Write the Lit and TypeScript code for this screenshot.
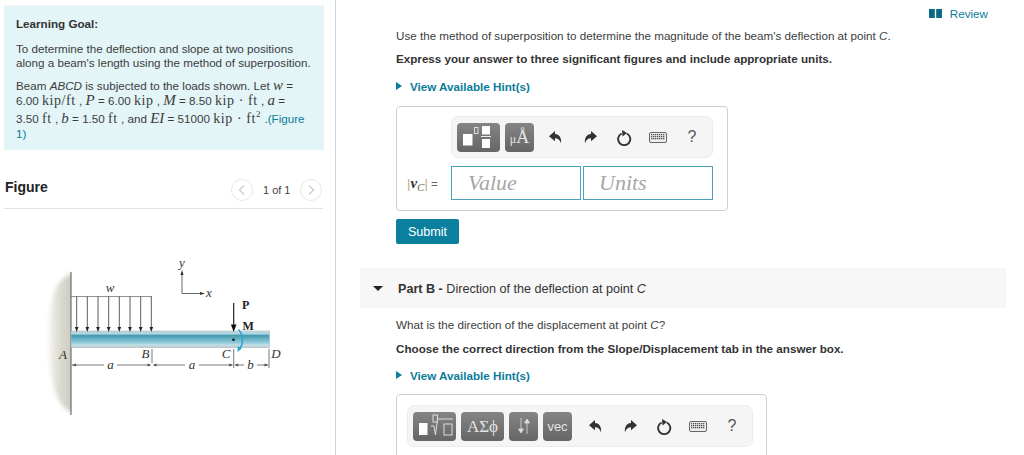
import { LitElement, html, css, svg } from "lit";
import { customElement } from "lit/decorators.js";

const undo = svg`<path d="M7 1 1 6.200l6 5.100V8.200c3 0 4.800 1.500 6 5 .7-5.200-1.500-9-6-9.300z" fill="#333"/>`;
const redo = svg`<path d="M9 1l6 5.200-6 5.100V8.200c-3 0-4.800 1.500-6 5-.7-5.200 1.500-9 6-9.300z" fill="#333"/>`;
const reload = svg`<path d="M5.600 3.500A6.100 6.100 0 1 0 10.800 3.500" fill="none" stroke="#333" stroke-width="1.900"/><path d="M6 0 11 2.900 6.500 6.400z" fill="#333"/>`;

@customElement("app-root")
export class AppRoot extends LitElement {
  static styles = css`
    :host { display: block; width: 1024px; height: 455px; overflow: hidden; background: #fff; font-family: "Liberation Sans", Arial, sans-serif; font-size: 11.650px; color: #3c3c3c; }
    .page { display: flex; height: 455px; }
    .left { width: 336px; height: 455px; flex: none; border-right: 1px solid #c9d6e2; padding-top: 5px; box-sizing: border-box; }
    .goal { width: 320px; height: 145px; margin-left: 4px; box-sizing: border-box; padding: 11px 12px 0; background: #e3f5f7; border-top: 1px solid #eef2f2; line-height: 14px; white-space: nowrap; }
    .goal h3 { margin: 0 0 11px; font-size: 11.650px; line-height: 14px; font-weight: 700; color: #333; }
    .goal p { margin: 0 0 8px; }
    .math { font-family: "Liberation Serif", serif; font-size: 14px; letter-spacing: .6px; }
    .mi { font-family: "Liberation Serif", serif; font-style: italic; font-size: 15px; }
    .l2 { display: block; line-height: 15px; }
    .l3 { display: block; line-height: 17px; margin-top: 2px; }
    .l4 { display: block; line-height: 15px; margin-top: -1px; }
    .l3 sup { font-size: 9px; line-height: 0; }
    .link { color: #0b7c9a; }
    .fig-head { display: flex; align-items: center; width: 319px; margin: 25px 0 0 4px; height: 34px; border-bottom: 1px solid #e2e2e2; box-sizing: border-box; padding: 0 1px 9px 0; }
    .fig-head h2 { margin: 0 0 0 1px; flex: 1; font-size: 14px; font-weight: 700; color: #222; }
    .pager { display: flex; align-items: center; gap: 9.500px; margin-top: 6px; font-size: 11px; color: #444; }
    .circ { width: 22px; height: 22px; border: 1px solid #e8e8e8; border-radius: 50%; box-sizing: border-box; display: flex; align-items: center; justify-content: center; }
    .figure { display: block; margin: 41px 0 0 30px; }
    .right { flex: 1; padding: 0 0 0 60px; min-width: 0; }
    .review { display: flex; justify-content: flex-end; align-items: center; gap: 8px; height: 14px; margin: 6px 36px 0 0; color: #0b7c9a; }
    .right p { margin: 0; line-height: 14px; white-space: nowrap; }
    .q { margin-top: 9px !important; }
    .b { font-weight: 700; margin-top: 9px !important; color: #333; }
    .b2 { margin-top: 10px !important; }
    .hint { display: flex; align-items: center; gap: 8px; margin-top: 13px; height: 14px; font-weight: 700; color: #0b7c9a; }
    .hint2 { margin-top: 12px; }
    .tri { width: 0; height: 0; border-left: 6px solid #0b7c9a; border-top: 4.500px solid transparent; border-bottom: 4.500px solid transparent; }
    .box { border: 1px solid #cfcfcf; border-radius: 4px; box-sizing: border-box; }
    .box1 { width: 332px; height: 105px; margin-top: 13px; padding: 9px 14px 0 54px; }
    .box2 { width: 371px; height: 80px; margin-top: 12px; padding: 10px 12px 0 10px; }
    .tools { display: flex; align-items: center; height: 42px; background: #f5f5f5; border: 1px solid #ececec; border-radius: 7px; box-sizing: border-box; padding-left: 5px; }
    .box2 .tools { width: 346px; }
    .btn { height: 29px; border-radius: 4px; background: linear-gradient(#858585, #656565); display: flex; align-items: baseline; justify-content: center; color: #e4e4e4; margin-right: 5px; flex: none; line-height: 29px; }
    .btn svg { align-self: center; }
    .w43 { width: 43px; } .w29 { width: 29px; }
    .sym { font-family: "Liberation Serif", serif; font-size: 17px; }
    .mu { font-size: 12px; }
    .ang { font-size: 18px; }
    .vec { font-size: 13px; }
    .ic { flex: none; width: 34px; display: flex; justify-content: center; align-items: center; color: #555; font-size: 16px; }
    .gap { width: 2px; flex: none; }
    .row { display: flex; align-items: center; margin: 8px 0 0 -44px; }
    .lbl { width: 45px; flex: none; font-size: 11.650px; color: #666; white-space: nowrap; margin-right: -1px; }
    .lbl i { font-family: "Liberation Serif", serif; font-weight: 700; font-size: 15px; color: #333; }
    .lbl sub { font-family: "Liberation Serif", serif; font-style: italic; font-size: 11px; line-height: 0; }
    .lbl .bar { color: #b9a98e; font-size: 13px; }
    .inp { width: 130px; height: 34px; border: 1px solid #4ba3b9; box-sizing: border-box; padding-left: 16px; display: flex; align-items: center; font: italic 22px "Liberation Serif", serif; color: #a6a6a6; }
    .inp + .inp { margin-left: 2px; padding-left: 15px; }
    .submit { width: 63px; height: 25px; margin-top: 8px; background: #0a7f9e; color: #fff; border-radius: 2px; display: flex; align-items: center; justify-content: center; font-size: 12.600px; }
    .partb { display: flex; align-items: center; height: 40px; width: 646px; margin: 24px 0 0 -36px; background: #f7f7f7; box-sizing: border-box; padding: 1px 0 0 13px; font-size: 12.600px; color: #333; white-space: pre; }
    .partb .down { width: 0; height: 0; border-top: 5px solid #222; border-left: 5px solid transparent; border-right: 5px solid transparent; margin-right: 15px; }
    .q2 { margin-top: 10px !important; }
    .kb { display: block; }
  `;

  private keyboard() {
    const keys = [];
    for (let r = 0; r < 3; r++) for (let c = 0; c < 7; c++) keys.push(svg`<rect x=${2 + c * 2} y=${2 + r * 2} width="1.300" height="1.300" fill="#555"/>`);
    return html`<svg class="kb" width="18" height="11" viewBox="0 0 18 11"><rect x=".5" y=".5" width="17" height="10" rx="1.500" fill="#eee" stroke="#666"/>${keys}</svg>`;
  }

  private rest() {
    return html`
      <span class="ic"><svg width="16" height="14" viewBox="0 0 16 14">${undo}</svg></span>
      <span class="ic"><svg width="16" height="14" viewBox="0 0 16 14">${redo}</svg></span>
      <span class="ic"><svg width="16" height="17" viewBox="0 0 16 17"><g transform="translate(0 1)">${reload}</g></svg></span>
      <span class="ic">${this.keyboard()}</span>
      <span class="ic">?</span>`;
  }

  private figure() {
    const xs = [46.7, 57.3, 68, 78.7, 89.300, 100, 110.700, 121.300];
    const T = (x: number, y: number, t: string) => svg`<text x=${x} y=${y} font-family="Liberation Serif" font-style="italic" font-size="13" fill="#333" text-anchor="middle">${t}</text>`;
    const B = (x: number, y: number, t: string) => svg`<text x=${x} y=${y} font-family="Liberation Serif" font-weight="700" font-size="12" fill="#222">${t}</text>`;
    const head = (x: number, y: number, dx: number) => svg`<path d="M${x} ${y}l${-dx * 4} -1.500v3z" fill="#555"/>`;
    return html`<svg class="figure" width="260" height="170" viewBox="0 0 260 170">
      <defs>
        <linearGradient id="wall" x1="0" x2="1"><stop offset="0" stop-color="#f4f4ef"/><stop offset=".4" stop-color="#dcdbd0"/><stop offset="1" stop-color="#c8c7ba"/></linearGradient>
        <linearGradient id="beam" x1="0" x2="0" y1="0" y2="1"><stop offset="0" stop-color="#c3dbe2"/><stop offset=".2" stop-color="#a9d2de"/><stop offset=".24" stop-color="#3f97ad"/><stop offset=".7" stop-color="#8fcad9"/><stop offset=".85" stop-color="#c4dfe6"/><stop offset="1" stop-color="#b9c9ce"/></linearGradient>
        <filter id="soft" x="-30%" y="-10%" width="160%" height="120%"><feGaussianBlur stdDeviation="2"/></filter>
        <clipPath id="wallclip"><rect x="0" y="0" width="41" height="170"/></clipPath>
      </defs>
      <g clip-path="url(#wallclip)"><path d="M46 22C30 26 22 40 20 62c-2 28-2 50 3 72 3 14 10 26 23 31z" fill="url(#wall)" filter="url(#soft)"/></g>
      <line x1="41" y1="22" x2="41" y2="165" stroke="#555" stroke-width="1"/>
      <rect x="41" y="81" width="198.500" height="16.500" fill="url(#beam)" stroke="#a8b8bc" stroke-width=".6"/>
      <line x1="41" y1="46.500" x2="122" y2="46.500" stroke="#777" stroke-width=".8"/>
      ${xs.map((x) => svg`<line x1=${x} y1="46.500" x2=${x} y2="79" stroke="#333" stroke-width=".8"/><path d="M${x} 82l-1.800 -5h3.600z" fill="#222"/>`)}
      ${T(80, 42, "w")}
      <path d="M152 22V43.500H173" fill="none" stroke="#444" stroke-width=".8"/>
      <path d="M152 20l-1.600 5h3.200z M175 43.500l-5 -1.600v3.200z" fill="#333"/>
      ${T(152, 17, "y")}${T(179, 47, "x")}
      <line x1="203.700" y1="53" x2="203.700" y2="76" stroke="#222" stroke-width="1.200"/>
      <path d="M203.700 82l-2.800 -7.500h5.600z" fill="#111"/>
      ${B(212, 59, "P")}${B(212.500, 80, "M")}
      <circle cx="203.500" cy="89.700" r="1.300" fill="#111"/>
      <path d="M208.500 79.500C213.500 85 213.500 94 209.500 99" fill="none" stroke="#29a3cf" stroke-width="1.500"/>
      <path d="M207.500 102l.3 -6 4 2.500z" fill="#29a3cf"/>
      ${T(33, 109, "A")}${T(115.500, 108, "B")}${T(196, 108, "C")}${T(246, 108, "D")}
      <g stroke="#555" stroke-width=".8" fill="none">
        <path d="M122 99V113 M203.700 99V118 M239 99V118"/>
        <path d="M42 115H74 M87 115H120 M124 115H155 M169 115H202 M205.500 115H214 M227 115H238"/>
      </g>
      ${head(42, 115, -1)}${head(121.500, 115, 1)}${head(122.500, 115, -1)}${head(203.200, 115, 1)}${head(204.200, 115, -1)}${head(238.500, 115, 1)}
      ${T(80.500, 119, "a")}${T(162, 119, "a")}${T(220.500, 119, "b")}
    </svg>`;
  }

  render() {
    return html`<div class="page">
      <div class="left">
        <div class="goal">
          <h3>Learning Goal:</h3>
          <p>To determine the deflection and slope at two positions<br>along a beam's length using the method of superposition.</p>
          <p>Beam <i>ABCD</i> is subjected to the loads shown. Let <span class="mi">w</span> =
            <span class="l2">6.00 <span class="math">kip/ft</span> , <span class="mi">P</span> = 6.00 <span class="math">kip</span> , <span class="mi">M</span> = 8.50 <span class="math">kip · ft</span> , <span class="mi">a</span> =</span>
            <span class="l3">3.50 <span class="math">ft</span> , <span class="mi">b</span> = 1.50 <span class="math">ft</span> , and <span class="mi">EI</span> = 51000 <span class="math">kip · ft<sup>2</sup></span> .<span class="link">(Figure</span></span>
            <span class="l4 link">1)</span>
          </p>
        </div>
        <div class="fig-head">
          <h2>Figure</h2>
          <div class="pager">
            <span class="circ"><svg width="8" height="12" viewBox="0 0 8 12"><path d="M6 1.500 1.500 6 6 10.500" fill="none" stroke="#ccc" stroke-width="1.300"/></svg></span>
            <span>1 of 1</span>
            <span class="circ"><svg width="8" height="12" viewBox="0 0 8 12"><path d="M2 1.500 6.500 6 2 10.500" fill="none" stroke="#ccc" stroke-width="1.300"/></svg></span>
          </div>
        </div>
        ${this.figure()}
      </div>
      <div class="right">
        <div class="review">
          <svg width="13" height="9" viewBox="0 0 13 9"><path d="M0 0h5.800v9H0z M7.200 0H13v9H7.200z" fill="#0b6a85"/></svg>
          <span>Review</span>
        </div>
        <p class="q">Use the method of superposition to determine the magnitude of the beam's deflection at point <i>C</i>.</p>
        <p class="b">Express your answer to three significant figures and include appropriate units.</p>
        <div class="hint"><span class="tri"></span><span>View Available Hint(s)</span></div>
        <div class="box box1">
          <div class="tools">
            <span class="btn w43"><svg width="43" height="29" viewBox="0 0 43 29"><rect x="6" y="11" width="9.500" height="11.500" fill="#fff"/><rect x="17.500" y="4.500" width="3.500" height="6" fill="none" stroke="#ddd"/><rect x="25" y="3" width="8" height="8.500" fill="#fff"/><rect x="24" y="13" width="10" height="1" fill="#eee"/><rect x="25" y="16" width="8" height="9" fill="#fff"/></svg></span>
            <span class="btn w29 sym"><span class="mu">μ</span><span class="ang">Å</span></span>
            ${this.rest()}
          </div>
          <div class="row">
            <span class="lbl"><span class="bar">|</span><i>v</i><sub>C</sub><span class="bar">|</span> =</span>
            <span class="inp">Value</span><span class="inp">Units</span>
          </div>
        </div>
        <div class="submit">Submit</div>
        <div class="partb"><span class="down"></span><b>Part B - </b><span>Direction of the deflection at point </span><i>C</i></div>
        <p class="q2">What is the direction of the displacement at point <i>C</i>?</p>
        <p class="b b2">Choose the correct direction from the Slope/Displacement tab in the answer box.</p>
        <div class="hint hint2"><span class="tri"></span><span>View Available Hint(s)</span></div>
        <div class="box box2">
          <div class="tools">
            <span class="btn w43"><svg width="43" height="29" viewBox="0 0 43 29"><rect x="6" y="11" width="8.500" height="12" fill="#fff"/><rect x="20" y="3" width="4.500" height="7" fill="none" stroke="#ddd"/><path d="M18 14h3l1.500 9 2-16H40" fill="none" stroke="#ddd"/><rect x="31" y="12" width="8" height="11" fill="none" stroke="#ddd"/></svg></span>
            <span class="btn w43 sym">ΑΣϕ</span>
            <span class="btn w29"><svg width="16" height="18" viewBox="0 0 16 18"><path d="M5 1v14M5 16l-2.500-4h5zM11 17V3M11 2 8.500 6h5z" fill="#ddd" stroke="#ddd" stroke-width=".8"/></svg></span>
            <span class="btn w29 vec">vec</span>
            <span class="gap"></span>
            ${this.rest()}
          </div>
        </div>
      </div>
    </div>`;
  }
}
